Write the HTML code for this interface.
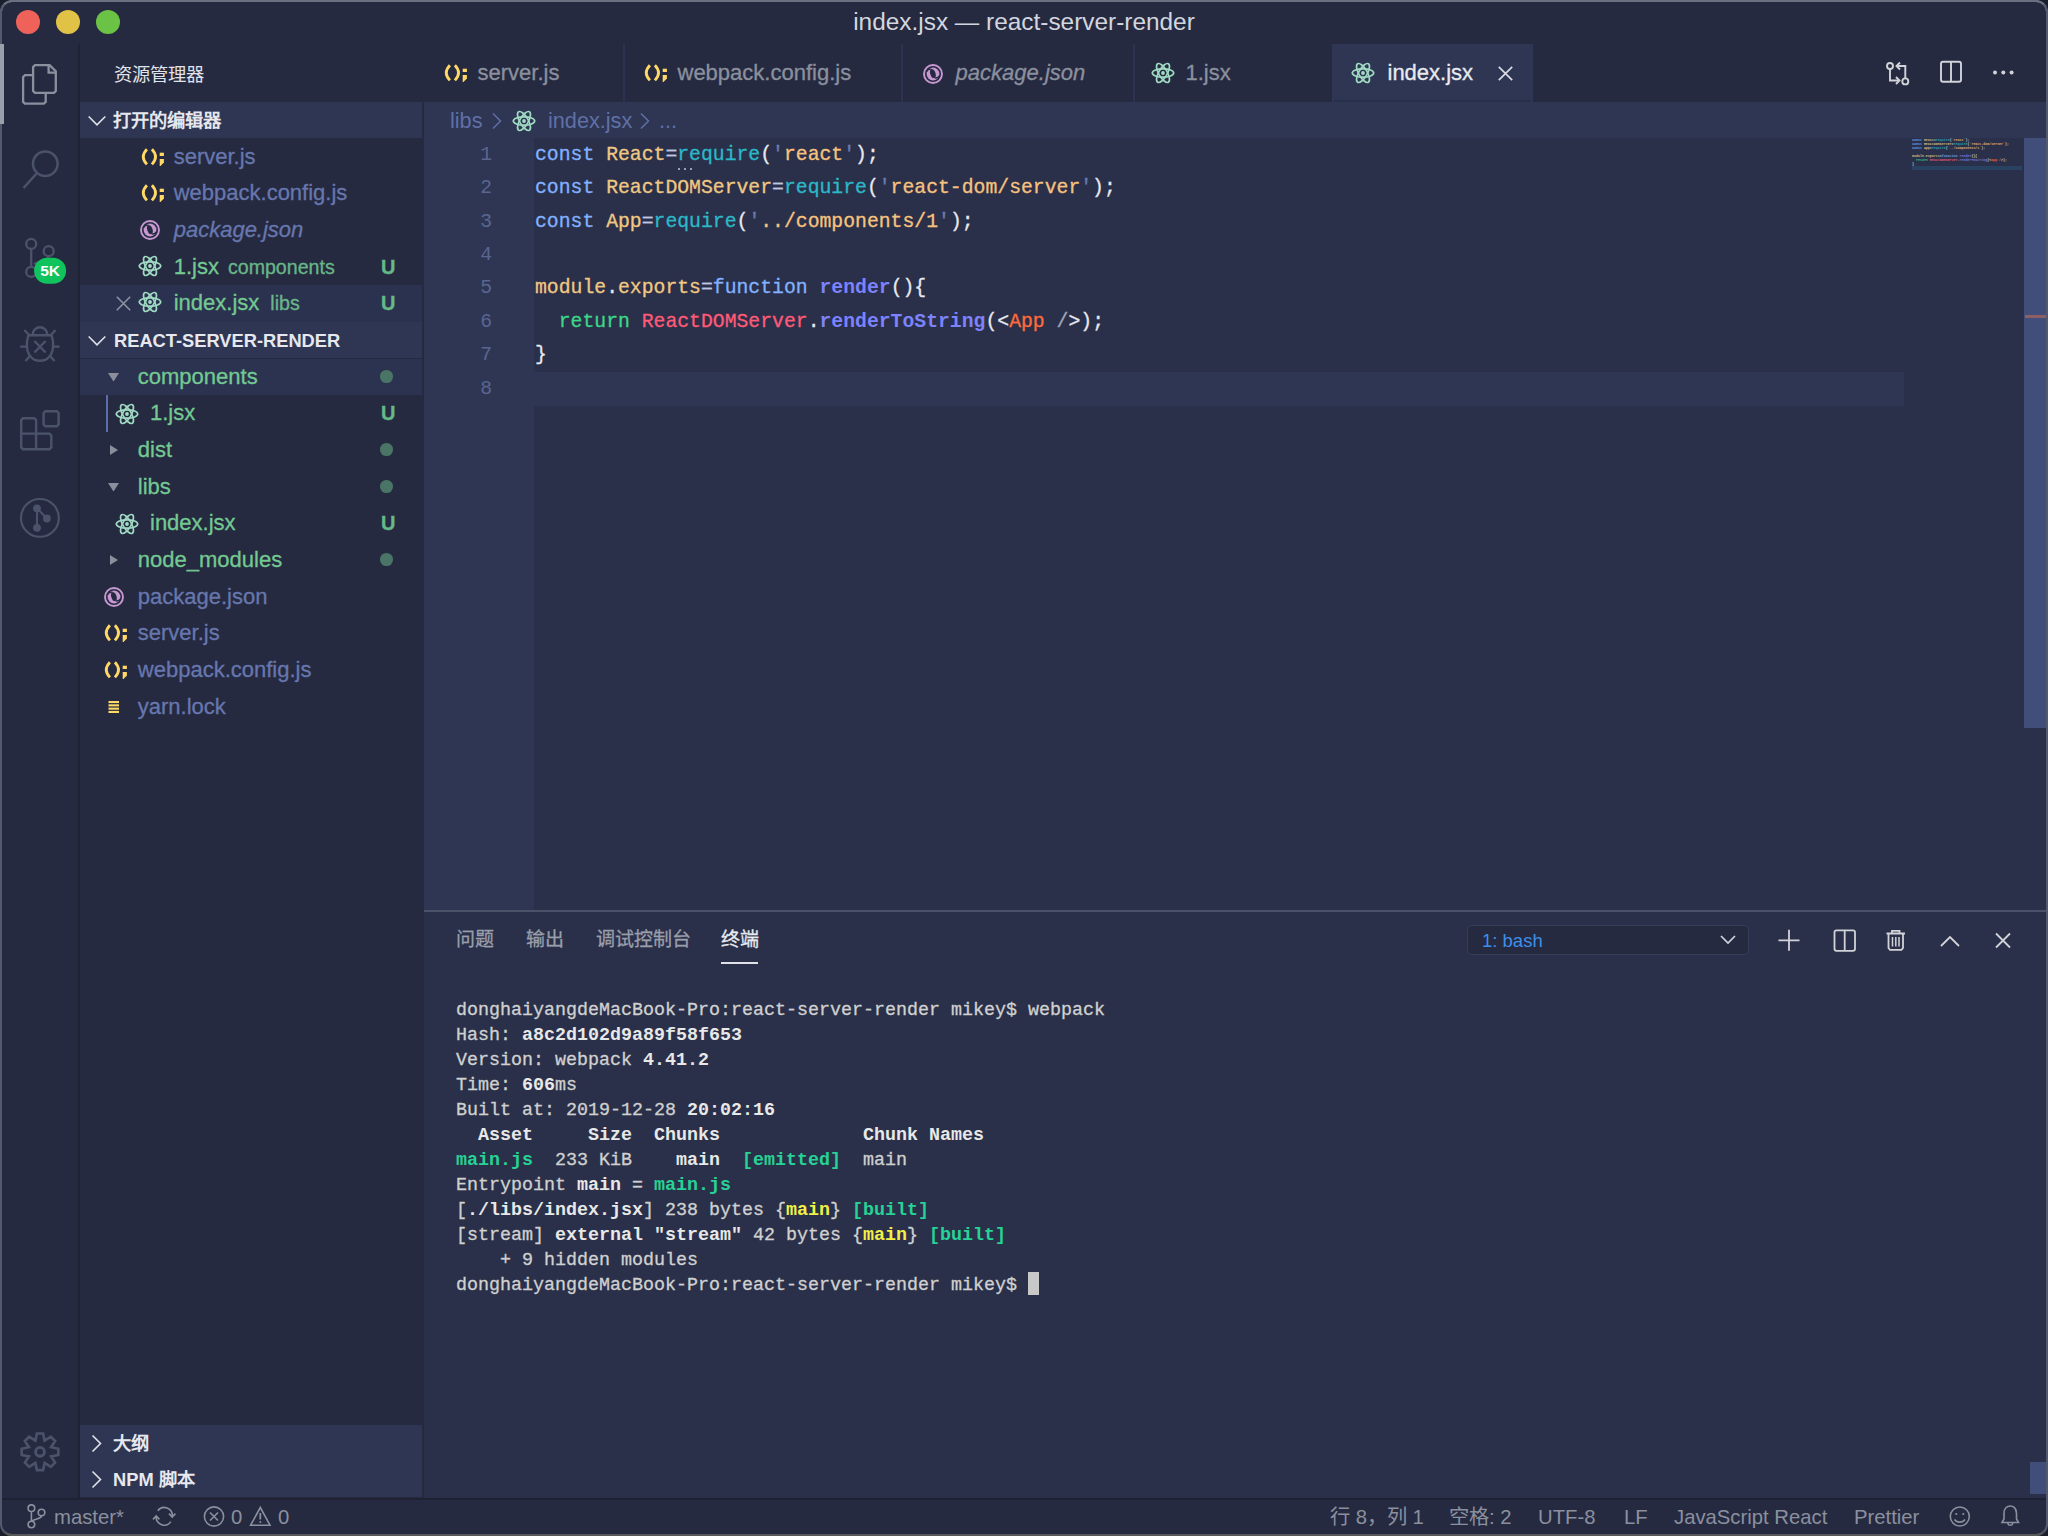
<!DOCTYPE html>
<html lang="zh-CN">
<head>
<meta charset="utf-8">
<style>
*{margin:0;padding:0;box-sizing:border-box}
html,body{width:2048px;height:1536px;overflow:hidden;background:#1a1d26}
body{font-family:"Liberation Sans",sans-serif;position:relative}
.abs{position:absolute}
svg{overflow:visible}
#win{position:absolute;left:0;top:0;width:2048px;height:1536px;border-radius:12px;background:#6b7080;overflow:hidden}
#inner{position:absolute;left:2px;top:2px;width:2044px;height:1532px;border-radius:10px;background:#252a41;overflow:hidden}
/* title */
.tl{position:absolute;top:10px;width:24px;height:24px;border-radius:50%}
#title{position:absolute;left:0;width:2048px;top:6px;text-align:center;font-size:24.4px;color:#d3d6de;line-height:32px}
/* activity bar */
#act{position:absolute;left:0;top:44px;width:78px;height:1454px;background:#252a41}
#actb{position:absolute;left:78px;top:44px;width:2px;height:1454px;background:#1f2435}
/* sidebar */
#side{position:absolute;left:80px;top:44px;width:344px;height:1454px;background:#252a41}
.sh{position:absolute;left:80px;width:342px;height:36px;background:#2e3654;color:#e6e8ee;font-weight:bold;font-size:18.3px;line-height:37px}
.row{position:absolute;left:80px;width:342px;height:36.67px;font-size:22px;line-height:36.67px;white-space:nowrap}
.row .t{position:absolute;top:0}
.blue{color:#6777ae}
.green{color:#73c991}
.desc{font-size:19.6px;opacity:.88}
.U{position:absolute;left:301px;top:0;color:#66b987;font-weight:bold;font-size:20px}
.dot{position:absolute;left:300.3px;top:11.3px;width:12.6px;height:12.6px;border-radius:50%;background:#4a7566}
/* editor */
#tabs{position:absolute;left:424px;top:44px;width:1622px;height:58px;background:#252a41}
.tab{position:absolute;top:44px;height:58px;font-size:22px;line-height:58px;color:#8b909e;white-space:nowrap}
.sep{position:absolute;top:44px;width:2px;height:58px;background:#2c3350}
#crumb{position:absolute;left:424px;top:102px;width:1622px;height:37px;background:#2e3654;font-size:22px;line-height:37px;color:#6777ae}
#gutter{position:absolute;left:424px;top:138px;width:110px;height:772px;background:#2e3654}
#code{position:absolute;left:534px;top:138px;width:1512px;height:772px;background:#2a3049}
.ln{position:absolute;left:424px;width:68px;text-align:right;font-family:"Liberation Mono",monospace;font-size:19.75px;color:#5a6590;height:33.33px;line-height:33.33px}
.cl{position:absolute;left:535px;font-family:"Liberation Mono",monospace;font-size:19.75px;height:33.33px;line-height:33.33px;white-space:pre;color:#c8cbd6}
.k{color:#82b1ff}.v{color:#f0c883}.o{color:#c0c8e0}.o2{color:#2cb8c8}.f{color:#2cb8c8}.p{color:#e8e8f0}.q{color:#6a7bb0}.s{color:#f7c27f}.fn{color:#7c83fd;font-weight:bold}.r{color:#3ed68a}.rd{color:#ff5a78}.tg{color:#ff6a3d}.sl{color:#a0a4b8}
/* panel */
#panel{position:absolute;left:424px;top:910px;width:1622px;height:588px;background:#2a3049}
#pborder{position:absolute;left:424px;top:910px;width:1622px;height:2px;background:#4b5168}
.ptab{position:absolute;top:925px;font-size:19px;color:#9a9eab;line-height:30px}
.term{position:absolute;left:456px;font-family:"Liberation Mono",monospace;font-size:18.33px;height:25px;line-height:25px;white-space:pre;color:#d0d0d0}
.term b{color:#e8e8e8}
.term b.tg2{color:#26d295}.term b.ty{color:#f2f046}
/* status */
#status{position:absolute;left:0;top:1498px;width:2046px;height:36px;background:#252a41;border-top:2px solid #1e2233;font-size:20px;color:#8b909e;line-height:34px}
.term,.cl,.row,.tab,.ptab,.stx{-webkit-text-stroke:0.3px currentColor}
.term b,.cl .fn,.sh{-webkit-text-stroke:0}
</style>
</head>
<body>
<div id="win"><div id="inner"></div></div>

<!-- traffic lights -->
<div class="tl" style="left:16px;background:#ee6259"></div>
<div class="tl" style="left:56px;background:#e0c246"></div>
<div class="tl" style="left:96px;background:#6bc345"></div>
<div id="title">index.jsx — react-server-render</div>

<!-- activity bar -->
<div id="act"></div>
<div id="actb"></div>
<svg class="abs" style="left:0;top:0" width="80" height="1536" viewBox="0 0 80 1536">
 <g fill="none" stroke="#8a909e" stroke-width="2.3" stroke-linejoin="miter">
  <path d="M35,65.1 H49.6 L55.8,71.3 V91 L54,92.9 H35 L33.1,91 V67 Z"/>
  <path d="M48.6,66 V72.6 H55"/>
  <path d="M33,75.2 H25 L23.1,77 V101.9 L25,103.7 H43.8 L45.7,101.9 V93"/>
 </g>
 <g fill="none" stroke="#4b536a" stroke-width="2.5">
  <circle cx="45.3" cy="163.7" r="12.3"/>
  <path d="M23.5,188 L36.5,173.6"/>
 </g>
 <g fill="none" stroke="#4b536a" stroke-width="2.3">
  <circle cx="31.2" cy="243.9" r="5"/>
  <circle cx="48.7" cy="251.2" r="5"/>
  <circle cx="31.2" cy="271.9" r="5"/>
  <path d="M31.2,249 V266.8"/>
  <path d="M48.7,256.2 C48,262 40,261 34,264"/>
 </g>
 <rect x="34.1" y="257.8" width="32" height="26" rx="13" fill="#10c35c"/>
 <text x="50.1" y="276.4" text-anchor="middle" font-family="Liberation Sans" font-weight="bold" font-size="15.5" fill="#ffffff">5K</text>
 <g fill="none" stroke="#4b536a" stroke-width="2.4">
  <path d="M32.7,334.5 A7.3,7.3 0 0 1 47.3,334.5"/>
  <path d="M28.4,335.3 H51.6 C54,342 54,352 49,357 C45,362 35,362 31,357 C26,352 26,342 28.4,335.3 Z"/>
  <path d="M24.3,330 L29.2,335 M55.5,330 L51,335 M20.2,346.6 H26.8 M53.2,346.6 H59.6 M25.4,361 L30.5,355.5 M54.6,361 L49.6,355.5"/>
  <path d="M34.4,341 L45.6,352.5 M45.6,341 L34.4,352.5"/>
 </g>
 <g fill="none" stroke="#4b536a" stroke-width="2.4">
  <path d="M43.6,413 L45.4,411.2 H56.8 L58.6,413 V424.5 L56.8,426.3 H45.4 L43.6,424.5 Z"/>
  <path d="M21.2,420 L23,418.3 H34.3 L36.1,420 V433.6 H49.5 L51.3,435.4 V447.4 L49.5,449.2 H23 L21.2,447.4 Z"/>
  <path d="M21.2,433.6 H36.1 V449.2"/>
 </g>
 <g fill="none" stroke="#4b536a" stroke-width="2.1">
  <circle cx="39.9" cy="517.9" r="18.9"/>
  <path d="M37,508.3 V527.8 M37,508.3 L46.9,518.5"/>
 </g>
 <g fill="#4b536a">
  <circle cx="37" cy="508.3" r="3.9"/><circle cx="46.9" cy="518.5" r="3.9"/><circle cx="37" cy="527.8" r="3.9"/>
 </g>
 <polygon fill="none" stroke="#4b536a" stroke-width="2.6" stroke-linejoin="miter" points="36.9,1433.5 43.1,1433.5 44.6,1440.7 50.8,1436.7 55.1,1441.0 51.1,1447.2 58.3,1448.7 58.3,1454.9 51.1,1456.4 55.1,1462.6 50.8,1466.9 44.6,1462.9 43.1,1470.1 36.9,1470.1 35.4,1462.9 29.2,1466.9 24.9,1462.6 28.9,1456.4 21.7,1454.9 21.7,1448.7 28.9,1447.2 24.9,1441.0 29.2,1436.7 35.4,1440.7"/>
 <circle cx="40" cy="1451.8" r="4.4" fill="none" stroke="#4b536a" stroke-width="2.9"/>
</svg>

<!-- sidebar -->
<div id="side"></div>
<svg width="0" height="0" style="position:absolute">
 <defs>
  <symbol id="i-js" viewBox="0 0 24 22" style="overflow:visible">
   <path d="M5.9,3.2 Q-1.3,10.7 5.9,18.4 M10.9,3.2 Q18.1,10.7 10.9,18.4" fill="none" stroke="#ffd866" stroke-width="2.8"/>
   <rect x="18.7" y="6.7" width="4.2" height="3.3" fill="#ffd866"/>
   <polygon points="18.7,13.1 22.9,13.1 22.9,16.5 19.5,20 18.7,20" fill="#ffd866"/>
  </symbol>
  <symbol id="i-react" viewBox="0 0 24 24">
   <g fill="none" stroke="#a0dac2" stroke-width="1.7">
    <ellipse cx="12" cy="12" rx="10.7" ry="4.2"/>
    <ellipse cx="12" cy="12" rx="10.7" ry="4.2" transform="rotate(60 12 12)"/>
    <ellipse cx="12" cy="12" rx="10.7" ry="4.2" transform="rotate(120 12 12)"/>
   </g>
   <circle cx="12" cy="12" r="1.9" fill="#a2dcc4"/>
  </symbol>
  <symbol id="i-pkg" viewBox="0 0 22 22">
   <circle cx="11" cy="11" r="9" fill="none" stroke="#c898d0" stroke-width="1.9"/>
   <circle cx="11" cy="11" r="6.4" fill="#c898d0"/>
   <ellipse cx="10.9" cy="10.6" rx="2.6" ry="4.5" transform="rotate(-18 10.9 10.6)" fill="#252a41"/>
   <path d="M4.3,9 C5.5,6.8 7.5,6 9.6,6.2" fill="none" stroke="#252a41" stroke-width="1.3"/>
   <path d="M17.7,12.6 C16.6,14.6 14.5,15.2 12.6,14.9" fill="none" stroke="#252a41" stroke-width="1.3"/>
  </symbol>
  <symbol id="i-yarn" viewBox="0 0 12 14">
   <g fill="#ffd866"><rect x="0.5" y="1" width="10.5" height="2.1"/><rect x="0.5" y="4.3" width="10.5" height="2.1"/><rect x="0.5" y="7.6" width="10.5" height="2.1"/><rect x="0.5" y="10.9" width="10.5" height="2.1"/></g>
  </symbol>
 </defs>
</svg>
<!-- sidebar title -->
<div class="abs" style="left:114px;top:59.5px;font-size:18.3px;line-height:30px;color:#e1e3ea">资源管理器</div>
<!-- open editors header -->
<div class="sh" style="top:102px"><span class="abs" style="left:33px;top:0">打开的编辑器</span></div>
<svg class="abs" style="left:80px;top:102px" width="30" height="37"><path d="M8.7,14.5 L17,22.8 L25.3,14.5" fill="none" stroke="#e0e2e8" stroke-width="1.6"/></svg>
<div class="row" style="top:138.67px"><svg class="abs" style="left:61px;top:7px" width="24" height="22"><use href="#i-js"/></svg><span class="t blue" style="left:93.7px">server.js</span></div>
<div class="row" style="top:175.33px"><svg class="abs" style="left:61px;top:7px" width="24" height="22"><use href="#i-js"/></svg><span class="t blue" style="left:93.7px">webpack.config.js</span></div>
<div class="row" style="top:212px"><svg class="abs" style="left:59px;top:7px" width="22" height="22"><use href="#i-pkg"/></svg><span class="t blue" style="left:93.7px;font-style:italic">package.json</span></div>
<div class="row" style="top:248.67px"><svg class="abs" style="left:58px;top:5px" width="24" height="24"><use href="#i-react"/></svg><span class="t green" style="left:93.7px">1.jsx<span class="desc" style="margin-left:9px">components</span></span><span class="U">U</span></div>
<div class="row" style="top:285.33px;background:#2b3250"><svg class="abs" style="left:36px;top:11px" width="15" height="15"><path d="M0.8,0.8 L14.2,14.2 M14.2,0.8 L0.8,14.2" stroke="#9095a3" stroke-width="1.5"/></svg><svg class="abs" style="left:58px;top:5px" width="24" height="24"><use href="#i-react"/></svg><span class="t green" style="left:93.7px">index.jsx<span class="desc" style="margin-left:11px">libs</span></span><span class="U">U</span></div>
<!-- project header -->
<div class="sh" style="top:322px"><span class="abs" style="left:34px;top:0">REACT-SERVER-RENDER</span></div>
<svg class="abs" style="left:80px;top:322px" width="30" height="37"><path d="M8.7,14.5 L17,22.8 L25.3,14.5" fill="none" stroke="#e0e2e8" stroke-width="1.6"/></svg>
<div class="row" style="top:358.67px;background:#2c3351"><svg class="abs" style="left:28px;top:14px" width="12" height="9"><polygon points="0,0 11,0 5.5,8.5" fill="#8b8f9c"/></svg><span class="t green" style="left:57.8px">components</span><span class="dot"></span></div>
<div class="row" style="top:395.33px"><div class="abs" style="left:26.3px;top:0;width:2px;height:36.67px;background:#5d6cab"></div><svg class="abs" style="left:34.5px;top:7px" width="24" height="24"><use href="#i-react"/></svg><span class="t green" style="left:70px">1.jsx</span><span class="U">U</span></div>
<div class="row" style="top:432px"><svg class="abs" style="left:30px;top:13px" width="9" height="11"><polygon points="0,0 0,10 8,5" fill="#8b8f9c"/></svg><span class="t green" style="left:57.8px">dist</span><span class="dot"></span></div>
<div class="row" style="top:468.67px"><svg class="abs" style="left:28px;top:14px" width="12" height="9"><polygon points="0,0 11,0 5.5,8.5" fill="#8b8f9c"/></svg><span class="t green" style="left:57.8px">libs</span><span class="dot"></span></div>
<div class="row" style="top:505.33px"><svg class="abs" style="left:34.5px;top:7px" width="24" height="24"><use href="#i-react"/></svg><span class="t green" style="left:70px">index.jsx</span><span class="U">U</span></div>
<div class="row" style="top:542px"><svg class="abs" style="left:30px;top:13px" width="9" height="11"><polygon points="0,0 0,10 8,5" fill="#8b8f9c"/></svg><span class="t green" style="left:57.8px">node_modules</span><span class="dot"></span></div>
<div class="row" style="top:578.67px"><svg class="abs" style="left:22.5px;top:7px" width="22" height="22"><use href="#i-pkg"/></svg><span class="t blue" style="left:57.8px">package.json</span></div>
<div class="row" style="top:615.33px"><svg class="abs" style="left:23.5px;top:7px" width="24" height="22"><use href="#i-js"/></svg><span class="t blue" style="left:57.8px">server.js</span></div>
<div class="row" style="top:652px"><svg class="abs" style="left:23.5px;top:7px" width="24" height="22"><use href="#i-js"/></svg><span class="t blue" style="left:57.8px">webpack.config.js</span></div>
<div class="row" style="top:688.67px"><svg class="abs" style="left:27.5px;top:11px" width="12" height="14"><use href="#i-yarn"/></svg><span class="t blue" style="left:57.8px">yarn.lock</span></div>
<!-- bottom sections -->
<div class="sh" style="top:1424.67px"><span class="abs" style="left:33px;top:0">大纲</span></div>
<svg class="abs" style="left:80px;top:1424.67px" width="30" height="37"><path d="M12.5,10.5 L20.5,18.5 L12.5,26.5" fill="none" stroke="#e0e2e8" stroke-width="1.6"/></svg>
<div class="sh" style="top:1461.33px"><span class="abs" style="left:33px;top:0">NPM 脚本</span></div>
<svg class="abs" style="left:80px;top:1461.33px" width="30" height="37"><path d="M12.5,10.5 L20.5,18.5 L12.5,26.5" fill="none" stroke="#e0e2e8" stroke-width="1.6"/></svg>

<!-- editor -->
<div id="tabs"></div>
<div class="tab" style="left:424px;width:199px"><svg class="abs" style="left:20px;top:18px" width="24" height="22"><use href="#i-js"/></svg><span class="abs" style="left:53.5px">server.js</span></div>
<div class="sep" style="left:623px"></div>
<div class="tab" style="left:625px;width:276px"><svg class="abs" style="left:19px;top:18px" width="24" height="22"><use href="#i-js"/></svg><span class="abs" style="left:52.5px">webpack.config.js</span></div>
<div class="sep" style="left:901px"></div>
<div class="tab" style="left:903px;width:230px"><svg class="abs" style="left:19px;top:19px" width="22" height="22"><use href="#i-pkg"/></svg><span class="abs" style="left:52.6px;font-style:italic">package.json</span></div>
<div class="sep" style="left:1133px"></div>
<div class="tab" style="left:1135px;width:197px"><svg class="abs" style="left:16px;top:17px" width="24" height="24"><use href="#i-react"/></svg><span class="abs" style="left:50.5px">1.jsx</span></div>
<div class="tab" style="left:1332px;width:201px;background:#2e3654;color:#e8eaf0"><svg class="abs" style="left:19px;top:17px" width="24" height="24"><use href="#i-react"/></svg><span class="abs" style="left:55.5px">index.jsx</span><svg class="abs" style="left:166px;top:21.6px" width="15" height="15"><path d="M0.8,0.8 L14.2,14.2 M14.2,0.8 L0.8,14.2" stroke="#d8dae2" stroke-width="1.7"/></svg></div>
<div class="abs" style="left:1334px;top:99.5px;width:197px;height:2px;background:#282f49"></div>
<!-- editor actions -->
<svg class="abs" style="left:1880px;top:50px" width="150" height="45" viewBox="1880 50 150 45">
 <g fill="none" stroke="#d2d3d8" stroke-width="1.9">
  <circle cx="1890" cy="66" r="3"/>
  <circle cx="1905.3" cy="81.4" r="3"/>
  <path d="M1890,69 V80.5 H1899"/>
  <path d="M1896,77 L1899.5,80.5 L1896,84"/>
  <path d="M1905.3,78.4 V66 H1897"/>
  <path d="M1900,62.5 L1896.5,66 L1900,69.5"/>
  <rect x="1941" y="61.8" width="20" height="20" rx="2"/>
  <path d="M1951,62 V81.8"/>
 </g>
 <g fill="#d2d3d8"><circle cx="1995" cy="72.6" r="2"/><circle cx="2003.3" cy="72.6" r="2"/><circle cx="2011.6" cy="72.6" r="2"/></g>
</svg>
<div id="crumb"></div>
<div class="abs" style="left:450px;top:102px;height:37px;line-height:37px;font-size:21.67px;color:#6070a6;white-space:nowrap">libs</div>
<svg class="abs" style="left:490px;top:110px" width="14" height="22"><path d="M3,3.5 L10.5,11 L3,18.5" fill="none" stroke="#6070a6" stroke-width="1.5"/></svg>
<svg class="abs" style="left:512px;top:108.5px" width="24" height="24"><use href="#i-react"/></svg>
<div class="abs" style="left:548px;top:102px;height:37px;line-height:37px;font-size:21.67px;color:#6070a6;white-space:nowrap">index.jsx</div>
<svg class="abs" style="left:638px;top:110px" width="14" height="22"><path d="M3,3.5 L10.5,11 L3,18.5" fill="none" stroke="#6070a6" stroke-width="1.5"/></svg>
<div class="abs" style="left:659px;top:102px;height:37px;line-height:37px;font-size:21.67px;color:#6070a6;white-space:nowrap">...</div>
<div id="gutter"></div>
<div id="code"></div>
<div class="abs" style="left:534px;top:372px;width:1370px;height:34px;background:#2e3654"></div>
<div class="abs" style="left:534px;top:372px;width:1px;height:34px;background:#2e3654"></div>
<div class="ln" style="top:138.67px">1</div>
<div class="ln" style="top:172.09px">2</div>
<div class="ln" style="top:205.51px">3</div>
<div class="ln" style="top:238.93px">4</div>
<div class="ln" style="top:272.35px">5</div>
<div class="ln" style="top:305.77px">6</div>
<div class="ln" style="top:339.19px">7</div>
<div class="ln" style="top:372.61px">8</div>
<div class="cl" style="top:138.67px"><span class="k">const</span> <span class="v">React</span><span class="o">=</span><span class="f">require</span><span class="p">(</span><span class="q">'</span><span class="s">react</span><span class="q">'</span><span class="p">);</span></div>
<div class="cl" style="top:172.09px"><span class="k">const</span> <span class="v">ReactDOMServer</span><span class="o">=</span><span class="f">require</span><span class="p">(</span><span class="q">'</span><span class="s">react-dom/server</span><span class="q">'</span><span class="p">);</span></div>
<div class="cl" style="top:205.51px"><span class="k">const</span> <span class="v">App</span><span class="o">=</span><span class="f">require</span><span class="p">(</span><span class="q">'</span><span class="s">../components/1</span><span class="q">'</span><span class="p">);</span></div>
<div class="cl" style="top:272.35px"><span class="v">module</span><span class="p">.</span><span class="v">exports</span><span class="o">=</span><span class="k">function</span> <span class="fn">render</span><span class="p">(){</span></div>
<div class="cl" style="top:305.77px">  <span class="r">return</span> <span class="rd">ReactDOMServer</span><span class="p">.</span><span class="fn">renderToString</span><span class="p">(&lt;</span><span class="tg">App</span> <span class="sl">/</span><span class="p">&gt;);</span></div>
<div class="cl" style="top:339.19px"><span class="p">}</span></div>
<div class="abs" style="left:678px;top:168px;width:15px;height:2px;background:repeating-linear-gradient(90deg,#9aa0b0 0 2.5px,transparent 2.5px 6px)"></div>
<!-- minimap -->
<div id="minimap" class="abs" style="left:1912px;top:137px;width:112px;height:40px;font-family:'Liberation Mono',monospace;font-size:3.3px;line-height:4px;white-space:pre;font-weight:bold;opacity:.85">
<div style="position:absolute;left:0;top:0.5px"><span class="k">const</span> <span class="v">React</span><span class="o">=</span><span class="f">require</span><span class="p">(</span><span class="q">'</span><span class="s">react</span><span class="q">'</span><span class="p">);</span></div>
<div style="position:absolute;left:0;top:4.5px"><span class="k">const</span> <span class="v">ReactDOMServer</span><span class="o">=</span><span class="f">require</span><span class="p">(</span><span class="q">'</span><span class="s">react-dom/server</span><span class="q">'</span><span class="p">);</span></div>
<div style="position:absolute;left:0;top:8.5px"><span class="k">const</span> <span class="v">App</span><span class="o">=</span><span class="f">require</span><span class="p">(</span><span class="q">'</span><span class="s">../components/1</span><span class="q">'</span><span class="p">);</span></div>
<div style="position:absolute;left:0;top:16.5px"><span class="v">module</span><span class="p">.</span><span class="v">exports</span><span class="o">=</span><span class="k">function</span> <span class="fn">render</span><span class="p">(){</span></div>
<div style="position:absolute;left:0;top:20.5px">  <span class="r">return</span> <span class="rd">ReactDOMServer</span><span class="p">.</span><span class="fn">renderToString</span><span class="p">(&lt;</span><span class="tg">App</span> <span class="sl">/</span><span class="p">&gt;);</span></div>
<div style="position:absolute;left:0;top:24.5px"><span class="p">}</span></div>
</div>
<div class="abs" style="left:1912px;top:166px;width:110px;height:3.6px;background:#2a4262"></div>
<div class="abs" style="left:2024px;top:138px;width:22px;height:590px;background:#424e7a"></div>
<div class="abs" style="left:2025px;top:315px;width:21px;height:3px;background:#8c5e66"></div>

<!-- panel -->
<div id="panel"></div>
<div id="pborder"></div>
<div class="ptab" style="left:456px">问题</div>
<div class="ptab" style="left:526px">输出</div>
<div class="ptab" style="left:596px">调试控制台</div>
<div class="ptab" style="left:721px;color:#e8eaf0">终端</div>
<div class="abs" style="left:721px;top:961.5px;width:37px;height:2.5px;background:#e0e2e8"></div>
<!-- terminal dropdown -->
<div class="abs" style="left:1467px;top:925px;width:282px;height:30px;border:1.5px solid #363e5c;border-radius:5px;background:#252a41"></div>
<div class="abs" style="left:1482px;top:925px;height:30px;line-height:32px;font-size:18.5px;color:#3d8fe8">1: bash</div>
<svg class="abs" style="left:1700px;top:925px" width="340" height="32" viewBox="1700 925 340 32">
 <path d="M1721,936 L1728,943 L1735,936" fill="none" stroke="#d0d3da" stroke-width="1.7"/>
 <g fill="none" stroke="#d2d3d8" stroke-width="1.8">
  <path d="M1789,929.8 V950.8 M1778.5,940.3 H1799.5"/>
  <rect x="1834.5" y="930.3" width="20.5" height="20.5" rx="2"/>
  <path d="M1844.7,930.5 V950.5"/>
  <path d="M1886.5,933.5 H1905 M1892,933.5 V930.8 H1899.5 V933.5"/>
  <path d="M1888.5,934 V948 L1890,949.8 H1901.5 L1903,948 V934"/>
  <path d="M1892.5,937 V946.5 M1895.8,937 V946.5 M1899,937 V946.5" stroke-width="1.5"/>
  <path d="M1941,946 L1950,937 L1959,946"/>
  <path d="M1996,933.5 L2010,947.5 M2010,933.5 L1996,947.5"/>
 </g>
</svg>
<div class="abs" style="left:2030px;top:1462px;width:16px;height:32px;background:#424e7a"></div>
<!-- terminal -->
<div class="term" style="top:997.5px">donghaiyangdeMacBook-Pro:react-server-render mikey$ webpack</div>
<div class="term" style="top:1022.5px">Hash: <b>a8c2d102d9a89f58f653</b></div>
<div class="term" style="top:1047.5px">Version: webpack <b>4.41.2</b></div>
<div class="term" style="top:1072.5px">Time: <b>606</b>ms</div>
<div class="term" style="top:1097.5px">Built at: 2019-12-28 <b>20:02:16</b></div>
<div class="term" style="top:1122.5px">  <b>Asset</b>     <b>Size</b>  <b>Chunks</b>             <b>Chunk Names</b></div>
<div class="term" style="top:1147.5px"><b class="tg2">main.js</b>  233 KiB    <b>main</b>  <b class="tg2">[emitted]</b>  main</div>
<div class="term" style="top:1172.5px">Entrypoint <b>main</b> = <b class="tg2">main.js</b></div>
<div class="term" style="top:1197.5px">[<b>./libs/index.jsx</b>] 238 bytes {<b class="ty">main</b>} <b class="tg2">[built]</b></div>
<div class="term" style="top:1222.5px">[stream] <b>external "stream"</b> 42 bytes {<b class="ty">main</b>} <b class="tg2">[built]</b></div>
<div class="term" style="top:1247.5px">    + 9 hidden modules</div>
<div class="term" style="top:1272.5px">donghaiyangdeMacBook-Pro:react-server-render mikey$ </div>
<div class="abs" style="left:1028px;top:1271.5px;width:11px;height:23.5px;background:#c8c8c8"></div>

<!-- status -->
<div id="status"></div>
<svg class="abs" style="left:0;top:1500px" width="2048" height="36" viewBox="0 1500 2048 36">
 <g fill="none" stroke="#8b909e" stroke-width="1.6">
  <circle cx="31.4" cy="1508.2" r="3.3"/>
  <circle cx="41.5" cy="1512.6" r="3.3"/>
  <circle cx="31.4" cy="1524.5" r="3.3"/>
  <path d="M31.4,1511.5 V1521.2 M41.5,1516 C41,1519 35,1518.5 32,1521"/>
  <path d="M157.8,1510.8 A8,8 0 0 1 172.2,1516.2 M170.8,1521.6 A8,8 0 0 1 156.2,1516.6"/>
  <path d="M169,1513.6 L172.2,1517 L175.4,1513.6 M153,1519.4 L156.2,1516 L159.4,1519.4"/>
  <circle cx="214" cy="1516.5" r="9.6"/>
  <path d="M210,1512.5 L218,1520.5 M218,1512.5 L210,1520.5"/>
  <path d="M260.3,1507.5 L270,1525.2 H250.6 Z"/>
  <path d="M260.3,1513 V1519.5" stroke-width="1.8"/>
  <circle cx="1959.8" cy="1516.5" r="9.5"/>
  <path d="M1954.5,1519.5 C1957,1523 1962.5,1523 1965,1519.5"/>
  <path d="M2002,1522.5 H2018.5 L2016.5,1519 V1513.5 C2016.5,1508 2013,1506 2010.3,1506 C2007.5,1506 2004,1508 2004,1513.5 V1519 Z"/>
  <path d="M2007.8,1523 C2008,1526 2012.5,1526 2012.8,1523"/>
 </g>
 <g fill="#8b909e"><circle cx="1956.3" cy="1514" r="1.1"/><circle cx="1963.3" cy="1514" r="1.1"/><circle cx="260.3" cy="1522" r="1"/></g>
</svg>
<div class="abs" style="left:54px;top:1500px;height:34px;line-height:34px;font-size:20.3px;color:#8b909e;white-space:nowrap">master*</div>
<div class="abs" style="left:231px;top:1500px;height:34px;line-height:34px;font-size:20.3px;color:#8b909e">0</div>
<div class="abs" style="left:278px;top:1500px;height:34px;line-height:34px;font-size:20.3px;color:#8b909e">0</div>
<div class="abs" style="left:1330px;top:1500px;height:34px;line-height:34px;font-size:20.3px;color:#8b909e;white-space:nowrap">行 8，列 1</div>
<div class="abs" style="left:1449px;top:1500px;height:34px;line-height:34px;font-size:20.3px;color:#8b909e;white-space:nowrap">空格: 2</div>
<div class="abs" style="left:1538px;top:1500px;height:34px;line-height:34px;font-size:20.3px;color:#8b909e;white-space:nowrap">UTF-8</div>
<div class="abs" style="left:1624px;top:1500px;height:34px;line-height:34px;font-size:20.3px;color:#8b909e;white-space:nowrap">LF</div>
<div class="abs" style="left:1674px;top:1500px;height:34px;line-height:34px;font-size:20.3px;color:#8b909e;white-space:nowrap">JavaScript React</div>
<div class="abs" style="left:1854px;top:1500px;height:34px;line-height:34px;font-size:20.3px;color:#8b909e;white-space:nowrap">Prettier</div>
<!-- window frame overlay -->
<div class="abs" style="left:-30px;top:-30px;width:2108px;height:1596px;border:30px solid #1b1f2c;border-radius:42px;pointer-events:none"></div>
<div class="abs" style="left:0;top:0;width:2048px;height:1536px;border:2px solid #545a6e;border-top-color:#6b7080;border-bottom-color:#585858;border-radius:12px;pointer-events:none"></div>
<div class="abs" style="left:0;top:44px;width:3.5px;height:80px;background:#9a9fab"></div>
</body>
</html>
